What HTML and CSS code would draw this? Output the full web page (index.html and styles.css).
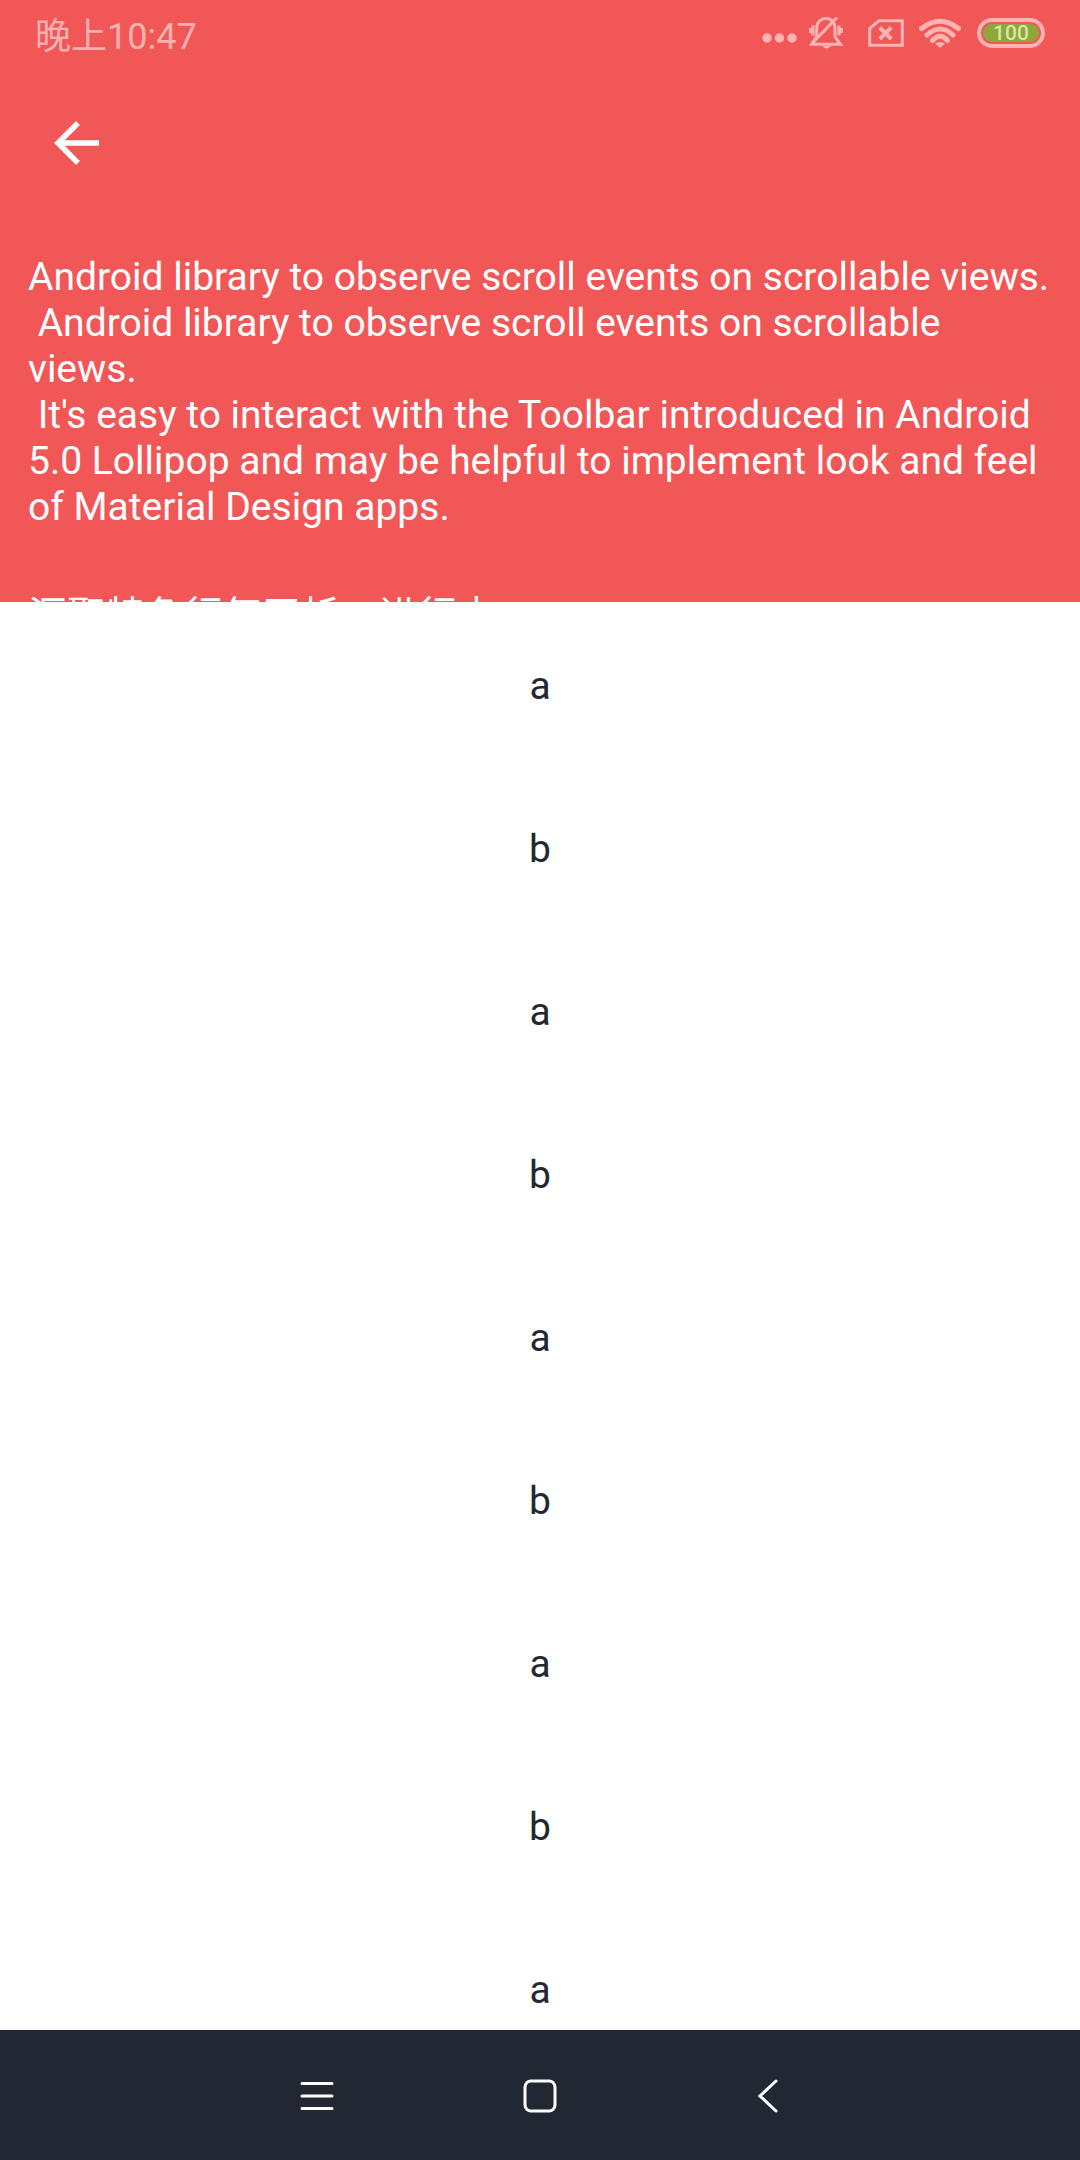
FILE: index.html
```html
<!DOCTYPE html>
<html lang="en">
<head>
<meta charset="utf-8">
<title>Scroll</title>
<link rel="stylesheet" href="styles.css">
</head>
<body>
<div class="screen">
  <header class="header">
    <div class="status">
      <span class="time">晚上10:47</span>
      <div class="status-icons">
        <svg class="ic-dots" width="35" height="10" viewBox="0 0 35 10"><circle cx="5" cy="5" r="4.700"/><circle cx="17.500" cy="5" r="4.700"/><circle cx="30" cy="5" r="4.700"/></svg>
        <svg class="ic-bell" width="34" height="32" viewBox="0 0 34 32"><path class="ln" d="M2.500 27.300L7.700 19.700V11.300C7.700 5 12 1.500 17 1.500S26 5 26 11.300V19.700L31.500 27.300z"/><path class="ln" d="M2 27.500L28 0.500"/><path class="ln" d="M1 11v5M4 8.500v10M30 8.500v10M33 11v5"/><path class="fl" d="M12.700 29h10l-5 3z"/></svg>
        <svg class="ic-sim" width="36" height="28" viewBox="0 0 36 28"><path class="ln" d="M11 1.700H34.300V26.300H1.700V9.500z"/><path class="ln x" d="M11.700 8.500L23.300 20M23.300 8.500L11.700 20"/></svg>
        <svg class="ic-wifi" width="42" height="30" viewBox="0 0 42 30"><path class="ln th" d="M2.500 10.500Q21 -4 39.500 10.500M8 17Q21 5 34 17M13.500 22.500Q21 14 28.500 22.500"/><path class="fl" d="M16 25.500Q21 22.500 26 25.500L21 30z"/></svg>
        <div class="battery"><span class="batt-fill">100</span></div>
      </div>
    </div>
    <div class="toolbar">
      <svg class="back" width="48" height="44" viewBox="0 0 48 44"><path d="M3 22H45M24 2L4 22l20 20"/></svg>
    </div>
    <div class="intro">
      <p>Android library to observe scroll events on scrollable views.<br>&nbsp;Android library to observe scroll events on scrollable views.<br>&nbsp;It's easy to interact with the Toolbar introduced in Android 5.0 Lollipop and may be helpful to implement look and feel of Material Design apps.</p>
      <p class="cn">汇聚特色行每天析，进行中</p>
    </div>
  </header>
  <main class="list">
    <div class="row">a</div>
    <div class="row">b</div>
    <div class="row">a</div>
    <div class="row">b</div>
    <div class="row">a</div>
    <div class="row">b</div>
    <div class="row">a</div>
    <div class="row">b</div>
    <div class="row">a</div>
  </main>
  <nav class="navbar">
    <svg class="nav-menu" width="34" height="30" viewBox="0 0 34 30"><path d="M2 2.500h30M2 15h30M2 27.500h30"/></svg>
    <svg class="nav-home" width="34" height="34" viewBox="0 0 34 34"><rect x="2" y="2" width="30" height="30" rx="6"/></svg>
    <svg class="nav-back" width="22" height="34" viewBox="0 0 22 34"><path d="M19 2L3 17l16 15"/></svg>
  </nav>
</div>
</body>
</html>
```
FILE: styles.css
```css
html, body {
  margin: 0;
  padding: 0;
}
body {
  width: 1080px;
  height: 2160px;
  overflow: hidden;
  font-family: Roboto, "Noto Sans CJK SC", sans-serif;
  background: #fff;
}
.screen {
  display: flex;
  flex-direction: column;
  height: 2160px;
}
.header {
  height: 602px;
  flex: none;
  overflow: hidden;
  background: #f25758;
  color: #fff;
}
.status {
  height: 66px;
  display: flex;
  align-items: center;
  justify-content: space-between;
  padding: 0 35px;
  color: rgba(255, 255, 255, 0.55);
}
.time {
  font-size: 36px;
}
.status-icons {
  display: flex;
  align-items: center;
}
.status-icons svg {
  fill: none;
  flex: none;
}
.ic-dots {
  fill: #ffb3b3 !important;
  margin-top: 10px;
}
.ic-bell {
  margin-left: 12px;
}
.ic-sim {
  margin-left: 25px;
}
.ic-wifi {
  margin-left: 15px;
}
.ln {
  fill: none;
  stroke: #ffb3b3;
  stroke-width: 3;
}
.ln.x {
  stroke-width: 4;
}
.ln.th {
  stroke-width: 5;
  stroke-linecap: round;
}
.fl {
  fill: #ffb3b3;
}
.battery {
  width: 68px;
  height: 30px;
  margin-left: 16px;
  box-sizing: border-box;
  border: 4px solid #ffb3b3;
  border-radius: 15px;
  padding: 2px;
  display: flex;
}
.batt-fill {
  flex: 1;
  border-radius: 9px;
  background: #8fa63a;
  color: #d8e4ad;
  font-size: 21px;
  font-weight: 500;
  line-height: 18px;
  text-align: center;
}
.toolbar {
  height: 154px;
  display: flex;
  align-items: center;
  padding-left: 54px;
}
.back {
  fill: none;
  stroke: #fff;
  stroke-width: 5.500;
}
.intro {
  padding: 0 28px;
  margin-top: 34px;
  font-size: 39px;
  line-height: 46px;
}
.intro p {
  margin: 0 0 63px;
}
.list {
  flex: 1;
  min-height: 0;
  overflow: hidden;
  padding-top: 2px;
}
.row {
  height: 163px;
  display: flex;
  align-items: center;
  justify-content: center;
  font-size: 39px;
  color: #212833;
}
.navbar {
  height: 130px;
  box-sizing: border-box;
  padding: 1px 0 0 300px;
  flex: none;
  background: #212833;
  display: flex;
  align-items: center;
}
.navbar svg {
  fill: none;
  stroke: #fff;
  stroke-width: 3;
  stroke-linecap: round;
}
.nav-home {
  margin-left: 189px;
}
.nav-back {
  margin-left: 200px;
}
```
